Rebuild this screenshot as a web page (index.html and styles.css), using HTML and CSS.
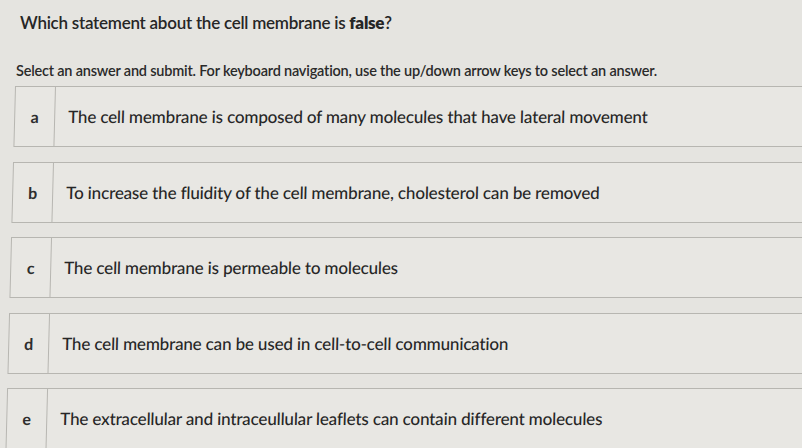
FILE: index.html
```html
<!DOCTYPE html>
<html lang="en">
<head>
<meta charset="utf-8">
<title>Question</title>
<link rel="stylesheet" href="styles.css">
</head>
<body>
<main class="page">
  <h1 class="question">Which statement about the cell membrane is <strong>false</strong>?</h1>
  <p class="instructions">Select an answer and submit. For keyboard navigation, use the up/down arrow keys to select an answer.</p>
  <ul class="answers">
    <li class="answer"><span class="letter">a</span><span class="text">The cell membrane is composed of many molecules that have lateral movement</span></li>
    <li class="answer"><span class="letter">b</span><span class="text">To increase the fluidity of the cell membrane, cholesterol can be removed</span></li>
    <li class="answer"><span class="letter">c</span><span class="text">The cell membrane is permeable to molecules</span></li>
    <li class="answer"><span class="letter">d</span><span class="text">The cell membrane can be used in cell-to-cell communication</span></li>
    <li class="answer"><span class="letter">e</span><span class="text">The extracellular and intraceullular leaflets can contain different molecules</span></li>
  </ul>
</main>
</body>
</html>
```
FILE: styles.css
```css
html, body {
  margin: 0;
  padding: 0;
  background: #e5e4e0;
  overflow: hidden;
}
body {
  font-family: Lato, "Open Sans", sans-serif;
  color: #2b2b2b;
  width: 802px;
  height: 448px;
}
.page {
  padding: 12px 0 0 0;
}
.question {
  margin: 0 0 0 20px;
  font-size: 17px;
  font-weight: 600;
  line-height: 22px;
  letter-spacing: -0.25px;
  color: #262626;
}
.question strong {
  font-weight: 800;
}
.instructions {
  margin: 27px 0 0 16px;
  font-size: 14.5px;
  line-height: 20px;
  font-weight: 600;
  letter-spacing: -0.2px;
  color: #2a2a2a;
}
.answers {
  list-style: none;
  margin: 5px 0 0 0;
  padding: 0 0 0 15px;
  display: flex;
  flex-direction: column;
  gap: 14.5px;
  transform-origin: 0 0;
  transform: skewX(-1.5deg);
}
.answer {
  display: flex;
  align-items: center;
  height: 59px;
  margin-right: -30px;
  border: 1px solid #b7b6b1;
  background: #e8e7e3;
}
.letter {
  width: 39px;
  align-self: stretch;
  display: flex;
  align-items: center;
  justify-content: center;
  border-right: 1px solid #b7b6b1;
  font-size: 16px;
  font-weight: 700;
  color: #2e2e2e;
}
.text {
  padding-left: 13px;
  font-size: 17px;
  font-weight: 500;
  letter-spacing: -0.15px;
  color: #262626;
}
```
